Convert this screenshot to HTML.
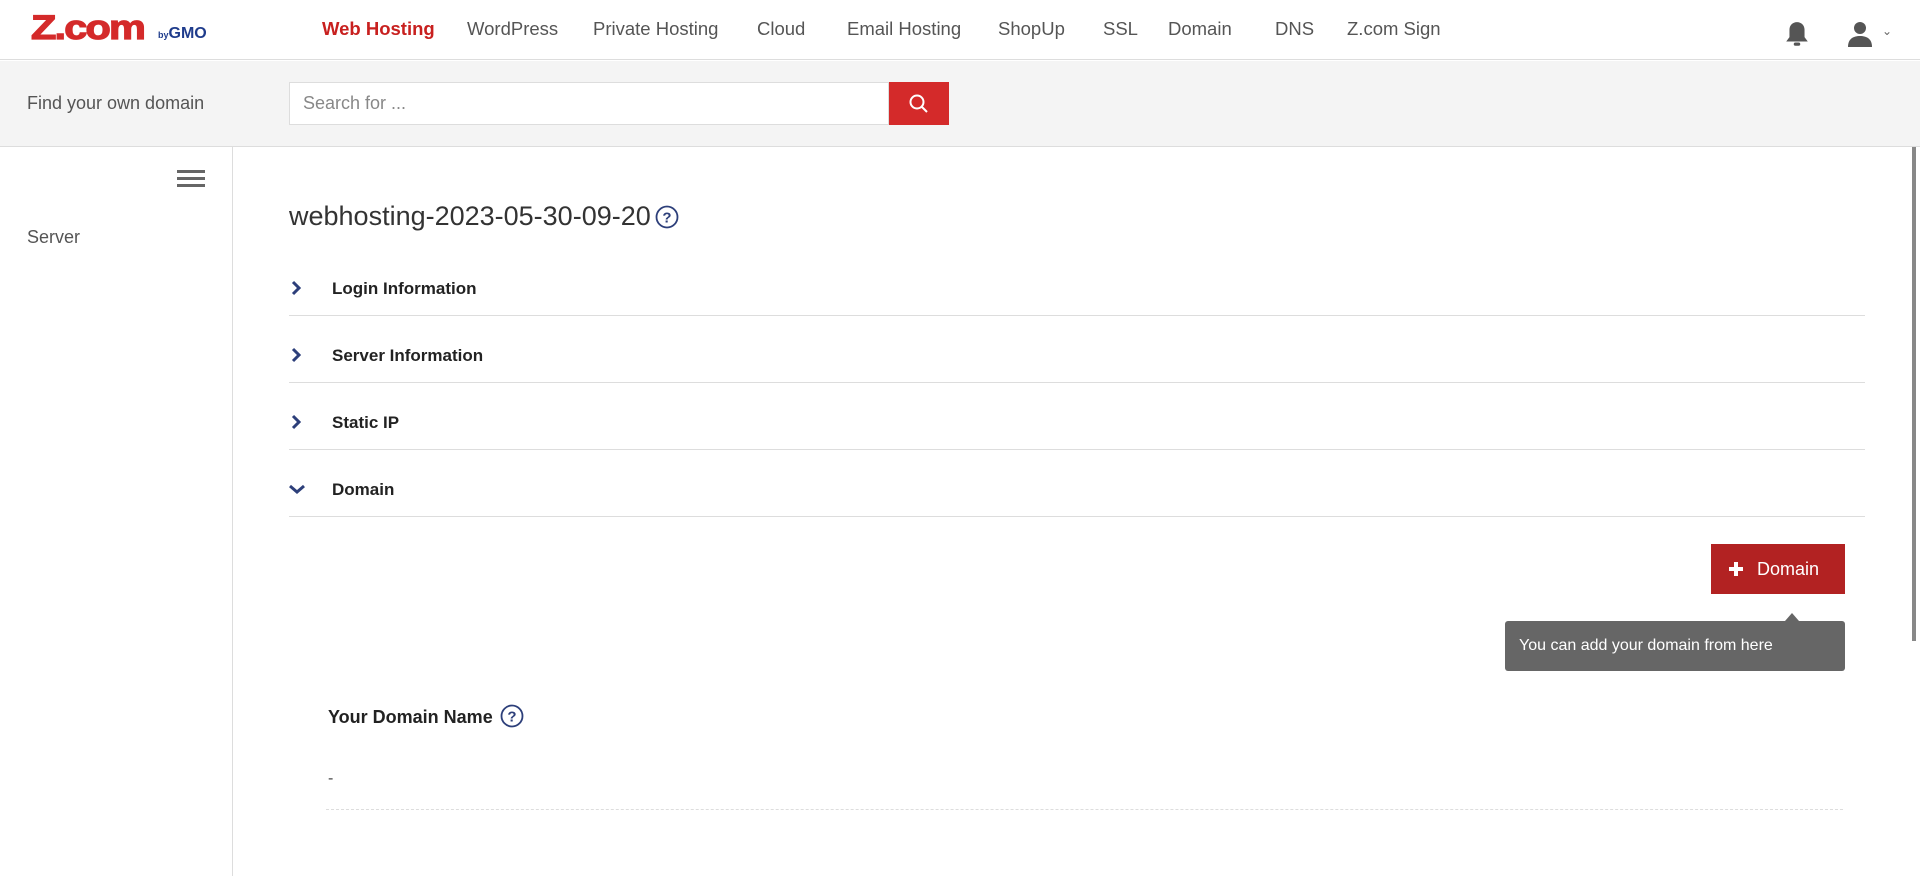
<!DOCTYPE html>
<html><head><meta charset="utf-8"><style>
*{margin:0;padding:0;box-sizing:border-box}
body{width:1920px;height:876px;overflow:hidden;background:#fff;font-family:"Liberation Sans",sans-serif;color:#333;position:relative}
.a{position:absolute;white-space:nowrap}
.nav{top:18px;font-size:18.5px;color:#555}
.row{left:332px;font-size:17px;font-weight:bold;color:#222}
.line{position:absolute;left:289px;width:1576px;height:1px;background:#ddd}
</style></head><body>
<!-- header -->
<div class="a" style="left:0;top:0;width:1920px;height:60px;background:#fff;border-bottom:1px solid #ddd"></div>
<div class="a" style="left:31px;top:9px;font-size:34px;font-weight:bold;color:#d42a2a;letter-spacing:-1.5px;-webkit-text-stroke:1.2px #d42a2a;transform:scaleX(1.22);transform-origin:left">Z.com</div>
<div class="a" style="left:158px;top:25px;font-size:16px;font-weight:bold;color:#1f3c8c"><span style="font-size:9px">by</span>GMO</div>
<div class="a nav" style="left:322px;color:#c8201f;font-weight:bold">Web Hosting</div>
<div class="a nav" style="left:467px">WordPress</div>
<div class="a nav" style="left:593px">Private Hosting</div>
<div class="a nav" style="left:757px">Cloud</div>
<div class="a nav" style="left:847px">Email Hosting</div>
<div class="a nav" style="left:998px">ShopUp</div>
<div class="a nav" style="left:1103px">SSL</div>
<div class="a nav" style="left:1168px">Domain</div>
<div class="a nav" style="left:1275px">DNS</div>
<div class="a nav" style="left:1347px">Z.com Sign</div>
<svg class="a" style="left:1784px;top:21px" width="26" height="28" viewBox="0 0 24 26"><path d="M12 1c-4 0-7 3-7 7v7l-3 4h20l-3-4V8c0-4-3-7-7-7z" fill="#555"/><rect x="9" y="20" width="6" height="3" rx="1.5" fill="#555"/></svg>
<svg class="a" style="left:1847px;top:20px" width="26" height="28" viewBox="0 0 26 28"><circle cx="13" cy="8" r="6" fill="#555"/><path d="M1 27c0-8 5-11 12-11s12 3 12 11z" fill="#555"/></svg>
<div class="a" style="left:1882px;top:24px;font-size:12px;color:#666">&#8964;</div>
<!-- search band -->
<div class="a" style="left:0;top:61px;width:1920px;height:86px;background:#f4f4f4;border-bottom:1px solid #ddd"></div>
<div class="a" style="left:27px;top:93px;font-size:18px;color:#555">Find your own domain</div>
<div class="a" style="left:289px;top:82px;width:600px;height:43px;background:#fff;border:1px solid #ddd"></div>
<div class="a" style="left:303px;top:93px;font-size:18px;color:#888">Search for ...</div>
<div class="a" style="left:889px;top:82px;width:60px;height:43px;background:#d42a2a"></div>
<svg class="a" style="left:907px;top:92px" width="24" height="24" viewBox="0 0 24 24"><circle cx="10" cy="10" r="6.5" fill="none" stroke="#fff" stroke-width="2"/><path d="M15 15l5 5" stroke="#fff" stroke-width="2"/></svg>
<!-- sidebar -->
<div class="a" style="left:232px;top:147px;width:1px;height:729px;background:#ddd"></div>
<div class="a" style="left:177px;top:170px;width:28px;height:3px;background:#666"></div>
<div class="a" style="left:177px;top:177px;width:28px;height:3px;background:#666"></div>
<div class="a" style="left:177px;top:184px;width:28px;height:3px;background:#666"></div>
<div class="a" style="left:27px;top:227px;font-size:18px;color:#555">Server</div>
<!-- scrollbar -->
<div class="a" style="left:1912px;top:147px;width:4px;height:494px;background:#888"></div>
<!-- title -->
<div class="a" style="left:289px;top:201px;font-size:27px;color:#333">webhosting-2023-05-30-09-20</div>
<svg class="a" style="left:655px;top:205px" width="24" height="24" viewBox="0 0 24 24"><circle cx="12" cy="12" r="10.5" fill="none" stroke="#2d3f7a" stroke-width="1.8"/><text x="12" y="17.5" text-anchor="middle" font-size="15" font-weight="bold" fill="#2d3f7a" font-family="Liberation Sans">?</text></svg>
<!-- accordion -->
<svg class="a" style="left:291px;top:280px" width="10" height="16" viewBox="0 0 10 16"><path d="M2 2l6 6-6 6" fill="none" stroke="#2d3f7a" stroke-width="3"/></svg>
<div class="a row" style="top:279px">Login Information</div>
<div class="line" style="top:315px"></div>
<svg class="a" style="left:291px;top:347px" width="10" height="16" viewBox="0 0 10 16"><path d="M2 2l6 6-6 6" fill="none" stroke="#2d3f7a" stroke-width="3"/></svg>
<div class="a row" style="top:346px">Server Information</div>
<div class="line" style="top:382px"></div>
<svg class="a" style="left:291px;top:414px" width="10" height="16" viewBox="0 0 10 16"><path d="M2 2l6 6-6 6" fill="none" stroke="#2d3f7a" stroke-width="3"/></svg>
<div class="a row" style="top:413px">Static IP</div>
<div class="line" style="top:449px"></div>
<svg class="a" style="left:288px;top:484px" width="18" height="10" viewBox="0 0 18 10"><path d="M2 2l7 6 7-6" fill="none" stroke="#2d3f7a" stroke-width="3"/></svg>
<div class="a row" style="top:480px">Domain</div>
<div class="line" style="top:516px"></div>
<!-- add domain button -->
<div class="a" style="left:1711px;top:544px;width:134px;height:50px;background:#b22222"></div>
<div class="a" style="left:1729px;top:567px;width:14px;height:4px;background:#fff"></div>
<div class="a" style="left:1734px;top:562px;width:4px;height:14px;background:#fff"></div>
<div class="a" style="left:1757px;top:559px;font-size:18px;color:#fff">Domain</div>
<!-- tooltip -->
<div class="a" style="left:1785px;top:613px;width:0;height:0;border-left:7px solid transparent;border-right:7px solid transparent;border-bottom:8px solid #666"></div>
<div class="a" style="left:1505px;top:621px;width:340px;height:50px;background:#666;border-radius:3px"></div>
<div class="a" style="left:1519px;top:637px;font-size:16px;color:#fff">You can add your domain from here</div>
<!-- your domain name -->
<div class="a" style="left:328px;top:707px;font-size:18px;font-weight:bold;color:#222">Your Domain Name</div>
<svg class="a" style="left:500px;top:704px" width="24" height="24" viewBox="0 0 24 24"><circle cx="12" cy="12" r="10.5" fill="none" stroke="#2d3f7a" stroke-width="1.8"/><text x="12" y="17.5" text-anchor="middle" font-size="15" font-weight="bold" fill="#2d3f7a" font-family="Liberation Sans">?</text></svg>
<div class="a" style="left:328px;top:770px;font-size:16px;color:#444">-</div>
<div class="a" style="left:326px;top:809px;width:1517px;height:0;border-top:1px dashed #ddd"></div>
</body></html>
